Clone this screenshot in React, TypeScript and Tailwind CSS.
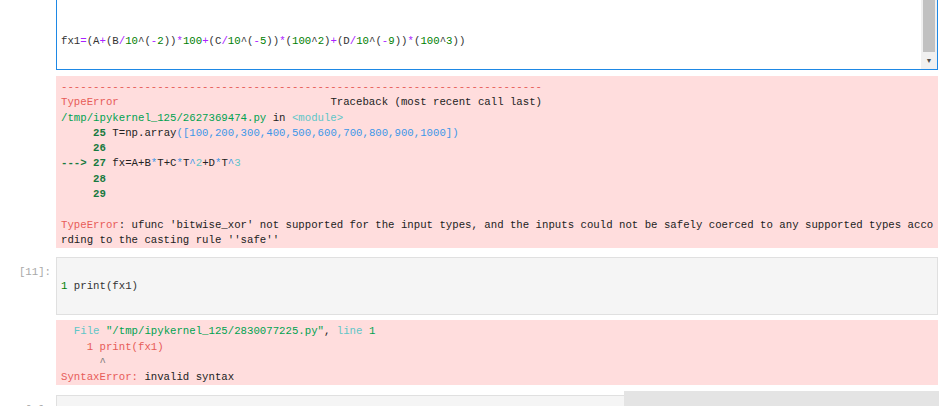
import React from 'react'

const mono = "font-['Liberation_Mono',monospace] text-[10.7px] leading-[15.3px]"

const P = ({ c }: { c: string }) => <span className="text-[#aa22ff]">{c}</span>
const N = ({ c }: { c: string }) => <span className="text-[#008000]">{c}</span>

const red = 'text-[#e75c58]'
const green = 'text-[#00a250]'
const cyan = 'text-[#60c6c8]'
const blue = 'text-[#3d97e8]'
const lineNo = 'text-[#187a3e] font-bold'

const Prompt = ({ label }: { label?: string }) => (
  <div className={`w-[56px] shrink-0 pr-[5px] pt-[8px] text-right text-[#a8a8a8] ${mono}`}>{label}</div>
)

const App = () => {
  return (
    <div className="relative w-[939px] h-[406px] overflow-hidden bg-white text-[#222]">
      <div className="flex flex-col">

        {/* editing cell, scrolled so only its lower part shows */}
        <div className="flex pr-[1px]">
          <Prompt />
          <div className="flex-1 flex h-[70px] border border-t-0 border-[#1e88e5] bg-white">
            <div className={`flex-1 flex items-center pl-[4px] pt-[15px] whitespace-pre text-[#333] ${mono}`}>
              <span>
                fx1<P c="=" />(A<P c="+" />(B<P c="/" /><N c="10" />^(<P c="-" /><N c="2" />))<P c="*" /><N c="100" /><P c="+" />(C<P c="/" /><N c="10" />^(<P c="-" /><N c="5" />))<P c="*" />(<N c="100" />^<N c="2" />)<P c="+" />(D<P c="/" /><N c="10" />^(<P c="-" /><N c="9" />))<P c="*" />(<N c="100" />^<N c="3" />))
              </span>
            </div>
            <div className="w-[16px] flex flex-col bg-[#f0f0f0]">
              <div className="h-[52px] mx-[2px] bg-[#c1c1c1]" />
              <div className="flex-1 flex items-center justify-center text-[#505050] text-[7px] leading-none">▼</div>
            </div>
          </div>
        </div>

        {/* traceback output */}
        <div className="flex pr-[1px] mt-[6px]">
          <Prompt />
          <div className={`flex-1 bg-[#ffdddd] pl-[5px] pt-[4px] whitespace-pre ${mono}`}>
            <div className={red}>---------------------------------------------------------------------------</div>
            <div><span className={red}>TypeError</span>                                 Traceback (most recent call last)</div>
            <div><span className={green}>/tmp/ipykernel_125/2627369474.py</span> in <span className={cyan}>&lt;module&gt;</span></div>
            <div>     <span className={lineNo}>25</span> T=np.array<span className={blue}>([100,200,300,400,500,600,700,800,900,1000])</span></div>
            <div>     <span className={lineNo}>26</span></div>
            <div><span className={lineNo}>---&gt; 27</span> fx=A+B<span className={blue}>*</span>T+C<span className={blue}>*</span>T<span className={blue}>^</span><span className={cyan}>2</span>+D<span className={blue}>*</span>T<span className={blue}>^</span><span className={cyan}>3</span></div>
            <div>     <span className={lineNo}>28</span></div>
            <div>     <span className={lineNo}>29</span></div>
            <div> </div>
            <div><span className={red}>TypeError</span>: ufunc 'bitwise_xor' not supported for the input types, and the inputs could not be safely coerced to any supported types acco</div>
            <div>rding to the casting rule ''safe''</div>
          </div>
        </div>

        {/* cell [11] */}
        <div className="flex pr-[1px] mt-[9px]">
          <Prompt label="[11]:" />
          <div className={`flex-1 h-[58px] flex items-center pl-[4px] border border-[#e0e0e0] bg-[#f5f5f5] whitespace-pre text-[#333] ${mono}`}>
            <span><span className="text-[#008000]">1</span> print(fx1)</span>
          </div>
        </div>

        <div className="flex pr-[1px] mt-[5px]">
          <Prompt />
          <div className={`flex-1 bg-[#ffdddd] pl-[5px] pt-[4px] whitespace-pre ${mono}`}>
            <div>  <span className={cyan}>File</span> <span className={green}>"/tmp/ipykernel_125/2830077225.py"</span>, <span className={cyan}>line</span> <span className={green}>1</span></div>
            <div className={red}>    1 print(fx1)</div>
            <div className="text-[#777]">      ^</div>
            <div><span className={red}>SyntaxError:</span> invalid syntax</div>
          </div>
        </div>

        {/* next empty cell */}
        <div className="flex pr-[1px] mt-[10px]">
          <Prompt label="[ ]:" />
          <div className="flex-1 h-[58px] border border-[#e0e0e0] bg-[#f5f5f5]" />
        </div>
      </div>

      {/* grey box lying over the bottom right corner */}
      <div className="absolute left-[624px] top-[391px] right-0 bottom-0 bg-[#e4e4e4]" />
    </div>
  )
}

export default App
